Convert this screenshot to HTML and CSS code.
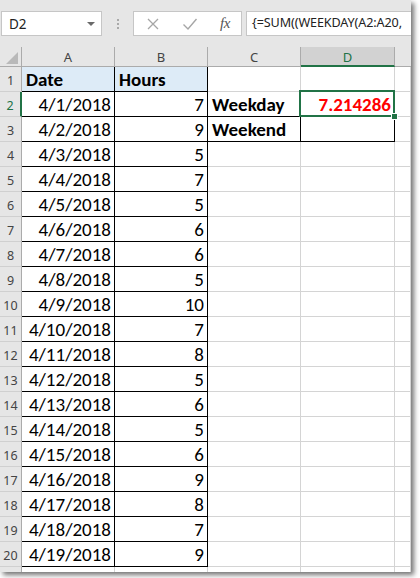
FILE: index.html
```html
<!DOCTYPE html>
<html>
<head>
<meta charset="utf-8">
<link rel="stylesheet" href="styles.css">
</head>
<body>
<div class="window">
  <div class="toolbar">
    <div class="namebox"><span class="name">D2</span><span class="caret"></span></div>
    <div class="dots"><i></i><i></i><i></i></div>
    <div class="btns">
      <svg class="ico" width="14" height="14" viewBox="0 0 14 14"><path d="M2 2 L12 12 M12 2 L2 12" stroke="#a6a6a6" stroke-width="1.3" fill="none"/></svg>
      <svg class="ico" width="16" height="14" viewBox="0 0 16 14"><path d="M1.5 7.5 L6 12 L14.5 2" stroke="#a6a6a6" stroke-width="1.4" fill="none"/></svg>
      <span class="fx">fx</span>
    </div>
    <div class="formula">{=SUM((WEEKDAY(A2:A20,</div>
  </div>
  <div class="sheet">
    <div class="ch corner"><span class="tri"></span></div>
    <div class="ch">A</div>
    <div class="ch">B</div>
    <div class="ch">C</div>
    <div class="ch sel">D</div>
    <div class="ch last"></div>

    <div class="rh">1</div>
    <div class="c hd">Date</div>
    <div class="c hd bx">Hours</div>
    <div class="c"></div>
    <div class="c bb"></div>
    <div class="c"></div>

    <div class="rh rsel">2</div>
    <div class="c r bx">4/1/2018</div>
    <div class="c r bx">7</div>
    <div class="c l bold bx">Weekday</div>
    <div class="c r bold red bx act">7.214286</div>
    <div class="c"></div>

    <div class="rh">3</div>
    <div class="c r bx">4/2/2018</div>
    <div class="c r bx">9</div>
    <div class="c l bold bx">Weekend</div>
    <div class="c bx"></div>
    <div class="c"></div>

    <div class="rh">4</div><div class="c r bx">4/3/2018</div><div class="c r bx">5</div><div class="c"></div><div class="c"></div><div class="c"></div>
    <div class="rh">5</div><div class="c r bx">4/4/2018</div><div class="c r bx">7</div><div class="c"></div><div class="c"></div><div class="c"></div>
    <div class="rh">6</div><div class="c r bx">4/5/2018</div><div class="c r bx">5</div><div class="c"></div><div class="c"></div><div class="c"></div>
    <div class="rh">7</div><div class="c r bx">4/6/2018</div><div class="c r bx">6</div><div class="c"></div><div class="c"></div><div class="c"></div>
    <div class="rh">8</div><div class="c r bx">4/7/2018</div><div class="c r bx">6</div><div class="c"></div><div class="c"></div><div class="c"></div>
    <div class="rh">9</div><div class="c r bx">4/8/2018</div><div class="c r bx">5</div><div class="c"></div><div class="c"></div><div class="c"></div>
    <div class="rh">10</div><div class="c r bx">4/9/2018</div><div class="c r bx">10</div><div class="c"></div><div class="c"></div><div class="c"></div>
    <div class="rh">11</div><div class="c r bx">4/10/2018</div><div class="c r bx">7</div><div class="c"></div><div class="c"></div><div class="c"></div>
    <div class="rh">12</div><div class="c r bx">4/11/2018</div><div class="c r bx">8</div><div class="c"></div><div class="c"></div><div class="c"></div>
    <div class="rh">13</div><div class="c r bx">4/12/2018</div><div class="c r bx">5</div><div class="c"></div><div class="c"></div><div class="c"></div>
    <div class="rh">14</div><div class="c r bx">4/13/2018</div><div class="c r bx">6</div><div class="c"></div><div class="c"></div><div class="c"></div>
    <div class="rh">15</div><div class="c r bx">4/14/2018</div><div class="c r bx">5</div><div class="c"></div><div class="c"></div><div class="c"></div>
    <div class="rh">16</div><div class="c r bx">4/15/2018</div><div class="c r bx">6</div><div class="c"></div><div class="c"></div><div class="c"></div>
    <div class="rh">17</div><div class="c r bx">4/16/2018</div><div class="c r bx">9</div><div class="c"></div><div class="c"></div><div class="c"></div>
    <div class="rh">18</div><div class="c r bx">4/17/2018</div><div class="c r bx">8</div><div class="c"></div><div class="c"></div><div class="c"></div>
    <div class="rh">19</div><div class="c r bx">4/18/2018</div><div class="c r bx">7</div><div class="c"></div><div class="c"></div><div class="c"></div>
    <div class="rh">20</div><div class="c r bx">4/19/2018</div><div class="c r bx">9</div><div class="c"></div><div class="c"></div><div class="c"></div>
    <div class="rh"></div><div class="c"></div><div class="c"></div><div class="c"></div><div class="c"></div><div class="c"></div>
  </div>
</div>
</body>
</html>
```

FILE: styles.css
```css
html, body {
  margin: 0;
  padding: 0;
  background: #ffffff;
  width: 420px;
  height: 578px;
  overflow: hidden;
}

.window {
  width: 411px;
  height: 572px;
  overflow: hidden;
  background: #ffffff;
  box-shadow: 3px 3px 5px rgba(0, 0, 0, 0.55);
}

.toolbar {
  height: 47px;
  background: #e6e6e6;
  display: flex;
  align-items: flex-start;
  padding-top: 11px;
  box-sizing: border-box;
  font-family: "Noto Sans", "Open Sans", sans-serif;
}

.namebox {
  margin-left: 1px;
  width: 101px;
  height: 25px;
  box-sizing: border-box;
  background: #fff;
  border: 1px solid #c6c6c6;
  display: flex;
  align-items: center;
  justify-content: space-between;
  padding: 0 6px 0 7px;
}

.name {
  font-size: 13.5px;
  color: #222;
}

.caret {
  width: 0;
  height: 0;
  border-left: 4px solid transparent;
  border-right: 4px solid transparent;
  border-top: 4px solid #6a6a6a;
}

.dots {
  width: 31px;
  display: flex;
  flex-direction: column;
  align-items: center;
  gap: 2px;
  padding-top: 8px;
}

.dots i {
  width: 2px;
  height: 2px;
  background: #a9a9a9;
}

.btns {
  width: 109px;
  height: 25px;
  box-sizing: border-box;
  background: #fff;
  border: 1px solid #c6c6c6;
  display: flex;
  align-items: center;
  padding-left: 12px;
}

.btns .ico:nth-child(2) {
  margin-left: 22px;
}

.fx {
  margin-left: 22px;
  font-family: "Liberation Serif", serif;
  font-style: italic;
  font-size: 15px;
  color: #555;
  letter-spacing: -0.5px;
}

.formula {
  margin-left: 4px;
  flex: 1;
  height: 25px;
  box-sizing: border-box;
  background: #fff;
  border: 1px solid #c6c6c6;
  border-right: none;
  font-size: 12.6px;
  letter-spacing: -0.1px;
  color: #222;
  padding-left: 5px;
  line-height: 22px;
  white-space: nowrap;
}

.sheet {
  display: grid;
  grid-template-columns: 22px 93px 93px 93px 94px 1fr;
  grid-template-rows: 20px repeat(21, 25px);
  font-family: "Carlito", "Liberation Sans", sans-serif;
}

.ch {
  background: #e6e6e6;
  border-right: 1px solid #ababab;
  border-bottom: 1px solid #ababab;
  font-family: "Noto Sans", "Open Sans", sans-serif;
  font-size: 13px;
  color: #444;
  display: flex;
  align-items: center;
  justify-content: center;
  line-height: 1;
  padding-top: 2px;
  box-sizing: border-box;
}

.ch.corner {
  position: relative;
}

.tri {
  position: absolute;
  right: 3px;
  bottom: 2px;
  width: 0;
  height: 0;
  border-left: 12px solid transparent;
  border-bottom: 12px solid #b9b9b9;
}

.ch.sel {
  background: #d2d2d2;
  color: #217346;
  border-bottom: 2px solid #217346;
}

.ch.last {
  border-right: none;
}

.rh {
  background: #e6e6e6;
  border-right: 1px solid #ababab;
  border-bottom: 1px solid #d0d0d0;
  font-family: "Noto Sans", "Open Sans", sans-serif;
  font-size: 12.5px;
  color: #444;
  display: flex;
  align-items: center;
  justify-content: center;
  padding-top: 2px;
  box-sizing: border-box;
}

.rh.rsel {
  color: #217346;
  border-right: 2px solid #217346;
}

.c {
  border-right: 1px solid #d4d4d4;
  border-bottom: 1px solid #d4d4d4;
  font-size: 19px;
  color: #000;
  display: flex;
  align-items: flex-end;
  padding: 0 3px 0 4px;
  white-space: nowrap;
  line-height: 22px;
}

.c.r {
  justify-content: flex-end;
}

.c.hd {
  background: #ddebf7;
  font-weight: bold;
  border-right: 1px solid #000;
  border-bottom: 1px solid #000;
}

.c.bold {
  font-weight: bold;
}

.c.red {
  color: #ff0000;
}

.c.bx {
  border-right: 1px solid #000;
  border-bottom: 1px solid #000;
}

.c.bb {
  border-bottom: 1px solid #000;
}

.c.act {
  position: relative;
}

.c.act::after {
  content: "";
  position: absolute;
  left: -2px;
  top: -2px;
  right: -1px;
  bottom: -1px;
  border: 2px solid #217346;
}

.c.act::before {
  content: "";
  position: absolute;
  right: -4px;
  bottom: -4px;
  width: 5px;
  height: 5px;
  background: #217346;
  border: 1px solid #fff;
  z-index: 2;
}
```
